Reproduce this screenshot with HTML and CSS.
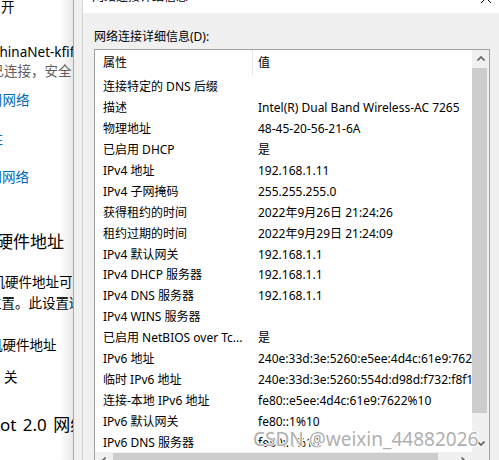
FILE: index.html
```html
<!DOCTYPE html>
<html lang="zh-CN">
<head>
<meta charset="utf-8">
<title>网络连接详细信息</title>
<link rel="stylesheet" href="styles.css">
</head>
<body>
<div class="screen">
  <div class="settings">
    <div class="s-line toggle-state">开</div>
    <div class="s-line wifi-name">ChinaNet-kfif</div>
    <div class="s-line wifi-status">已连接，安全</div>
    <div class="s-line link show-networks">可用网络</div>
    <div class="s-line link hw-props">属性</div>
    <div class="s-line link known-networks">知网络</div>
    <div class="s-heading random-heading">机硬件地址</div>
    <div class="s-line desc-1">机硬件地址可以使</div>
    <div class="s-line desc-2">位置。此设置适用</div>
    <div class="s-line random-label">机硬件地址</div>
    <div class="s-line toggle-off">关</div>
    <div class="s-heading hotspot-heading">ot 2.0 网络</div>
  </div>
  <div class="back-window"></div>
  <div class="dialog">
    <div class="titlebar">
      <span class="title">网络连接详细信息</span>
      <svg class="close" viewBox="0 0 10 10" width="10" height="10"><path d="M0 0 L10 10 M10 0 L0 10" stroke="#000" stroke-width="1" fill="none"/></svg>
    </div>
    <div class="dialog-body">
      <div class="label">网络连接详细信息(D):</div>
      <div class="listview">
        <div class="lv-content">
          <div class="lv-row lv-header"><div class="c1">属性</div><div class="c2">值</div></div>
          <div class="lv-row"><div class="c1">连接特定的 DNS 后缀</div><div class="c2"></div></div>
          <div class="lv-row"><div class="c1">描述</div><div class="c2">Intel(R) Dual Band Wireless-AC 7265</div></div>
          <div class="lv-row"><div class="c1">物理地址</div><div class="c2">48-45-20-56-21-6A</div></div>
          <div class="lv-row"><div class="c1">已启用 DHCP</div><div class="c2">是</div></div>
          <div class="lv-row"><div class="c1">IPv4 地址</div><div class="c2">192.168.1.11</div></div>
          <div class="lv-row"><div class="c1">IPv4 子网掩码</div><div class="c2">255.255.255.0</div></div>
          <div class="lv-row"><div class="c1">获得租约的时间</div><div class="c2">2022年9月26日 21:24:26</div></div>
          <div class="lv-row"><div class="c1">租约过期的时间</div><div class="c2">2022年9月29日 21:24:09</div></div>
          <div class="lv-row"><div class="c1">IPv4 默认网关</div><div class="c2">192.168.1.1</div></div>
          <div class="lv-row"><div class="c1">IPv4 DHCP 服务器</div><div class="c2">192.168.1.1</div></div>
          <div class="lv-row"><div class="c1">IPv4 DNS 服务器</div><div class="c2">192.168.1.1</div></div>
          <div class="lv-row"><div class="c1">IPv4 WINS 服务器</div><div class="c2"></div></div>
          <div class="lv-row"><div class="c1">已启用 NetBIOS over Tc...</div><div class="c2">是</div></div>
          <div class="lv-row"><div class="c1">IPv6 地址</div><div class="c2">240e:33d:3e:5260:e5ee:4d4c:61e9:7622</div></div>
          <div class="lv-row"><div class="c1">临时 IPv6 地址</div><div class="c2">240e:33d:3e:5260:554d:d98d:f732:f8f1</div></div>
          <div class="lv-row"><div class="c1">连接-本地 IPv6 地址</div><div class="c2">fe80::e5ee:4d4c:61e9:7622%10</div></div>
          <div class="lv-row"><div class="c1">IPv6 默认网关</div><div class="c2">fe80::1%10</div></div>
          <div class="lv-row"><div class="c1">IPv6 DNS 服务器</div><div class="c2">fe80::1%10</div></div>
        </div>
        <div class="vscroll">
          <div class="sb-btn"><svg viewBox="0 0 8 5" width="8" height="5"><path d="M0.5 4.5 L4 1 L7.5 4.5" stroke="#606060" stroke-width="1.6" fill="none"/></svg></div>
          <div class="v-track"><div class="v-thumb"></div></div>
          <div class="sb-btn"><svg viewBox="0 0 8 5" width="8" height="5"><path d="M0.5 0.5 L4 4 L7.5 0.5" stroke="#606060" stroke-width="1.6" fill="none"/></svg></div>
        </div>
        <div class="hscroll">
          <div class="sb-btn"><svg viewBox="0 0 5 8" width="5" height="8"><path d="M4.5 0.5 L1 4 L4.5 7.5" stroke="#606060" stroke-width="1.6" fill="none"/></svg></div>
          <div class="h-track"><div class="h-thumb"></div></div>
          <div class="sb-btn"><svg viewBox="0 0 5 8" width="5" height="8"><path d="M0.5 0.5 L4 4 L0.5 7.5" stroke="#606060" stroke-width="1.6" fill="none"/></svg></div>
        </div>
        <div class="corner"></div>
      </div>
    </div>
  </div>
  <div class="watermark">CSDN @weixin_44882026</div>
</div>
</body>
</html>
```

FILE: styles.css
```css
html, body {
  margin: 0;
  padding: 0;
  background: #ffffff;
}
body {
  overflow: hidden;
}
.screen {
  position: relative;
  width: 499px;
  height: 460px;
  display: flex;
  overflow: hidden;
  font-family: "Noto Sans", "Noto Sans CJK SC", sans-serif;
}

/* ---------- settings page behind ---------- */
.settings {
  position: relative;
  flex: none;
  width: 73px;
  height: 460px;
  background: #ffffff;
  overflow: hidden;
  color: #000;
  font-size: 13.5px;
}
.settings::after {
  content: "";
  position: absolute;
  top: 0;
  right: 0;
  bottom: 0;
  width: 14px;
  background: linear-gradient(to right, rgba(0,0,0,0), rgba(0,0,0,0.09));
}
.s-line {
  white-space: nowrap;
  line-height: 20px;
  height: 20px;
}
.s-heading {
  white-space: nowrap;
  line-height: 24px;
  height: 24px;
  font-size: 17px;
}
.link { color: #0067b8; }
.toggle-state { margin-top: -3px; padding-left: 1px; }
.wifi-name { margin-top: 25px; margin-left: -9px; }
.wifi-status { margin-top: -1px; margin-left: -9.5px; color: #5f5f5f; }
.show-networks { margin-top: 9px; margin-left: -24.5px; }
.hw-props { margin-top: 19px; margin-left: -24px; }
.known-networks { margin-top: 18px; margin-left: -11.5px; }
.random-heading { margin-top: 43px; margin-left: -21px; }
.desc-1 { margin-top: 18px; margin-left: -8.5px; }
.desc-2 { margin-top: 1px; margin-left: -12px; }
.random-label { margin-top: 22px; margin-left: -11px; }
.toggle-off { margin-top: 12px; padding-left: 4px; }
.hotspot-heading { margin-top: 26px; margin-left: 0; word-spacing: 2px; }

/* ---------- window behind dialog ---------- */
.back-window {
  flex: none;
  box-sizing: border-box;
  width: 9px;
  height: 460px;
  background: #f0f0f0;
  border-left: 1px solid #a8a8a8;
}

/* ---------- dialog ---------- */
.dialog {
  flex: 1;
  display: flex;
  flex-direction: column;
  overflow: hidden;
  background: #f0f0f0;
  border-left: 1px solid #d4d4d4;
  font-size: 12px;
  color: #000;
}
.titlebar {
  flex: none;
  height: 13px;
  background: #ffffff;
  display: flex;
  justify-content: space-between;
  align-items: flex-start;
  padding-left: 9px;
}
.title {
  line-height: 12px;
  margin-top: -9px;
  white-space: nowrap;
}
.close {
  margin-top: -7px;
  margin-right: 8px;
}
.dialog-body {
  flex: none;
  padding: 0 9px 0 11px;
}
.label {
  margin-top: 16px;
  line-height: 16px;
  height: 16px;
  white-space: nowrap;
}
.listview {
  margin-top: 4px;
  border: 1px solid #a0a0a0;
  background: #ffffff;
  display: grid;
  grid-template-columns: 377px 17px;
  grid-template-rows: 402px 17px;
}
.lv-content {
  overflow: hidden;
}
.lv-row {
  display: flex;
  height: 20.95px;
  line-height: 20.95px;
  white-space: nowrap;
}
.lv-row .c1 {
  flex: none;
  box-sizing: border-box;
  width: 158px;
  padding-left: 8px;
  overflow: hidden;
}
.lv-row .c2 {
  flex: 1;
  padding-left: 5px;
  overflow: hidden;
}
.lv-header {
  height: 27px;
  line-height: 26px;
}
.lv-header .c1 {
  height: 25px;
  border-right: 1px solid #e5e5e5;
}

/* scrollbars */
.vscroll {
  background: #f0f0f0;
  display: flex;
  flex-direction: column;
}
.sb-btn {
  flex: none;
  width: 17px;
  height: 17px;
  display: flex;
  align-items: center;
  justify-content: center;
}
.v-track {
  flex: 1;
}
.v-thumb {
  margin-top: 1px;
  width: 15px;
  height: 345px;
  background: #cdcdcd;
}
.hscroll {
  background: #f0f0f0;
  display: flex;
  flex-direction: row;
}
.h-track {
  flex: 1;
  display: flex;
  align-items: flex-start;
}
.h-thumb {
  margin-left: 1px;
  margin-top: 1px;
  width: 325px;
  height: 15px;
  background: #cdcdcd;
}
.corner {
  background: #f0f0f0;
}

/* watermark overlay */
.watermark {
  position: absolute;
  left: 253px;
  top: 430px;
  font-family: "Noto Sans", sans-serif;
  font-size: 19px;
  line-height: 19px;
  color: #b0b0b0;
  white-space: nowrap;
  text-shadow: 1px 0 0 #fff, -1px 0 0 #fff, 0 1px 0 #fff, 0 -1px 0 #fff;
}
```
